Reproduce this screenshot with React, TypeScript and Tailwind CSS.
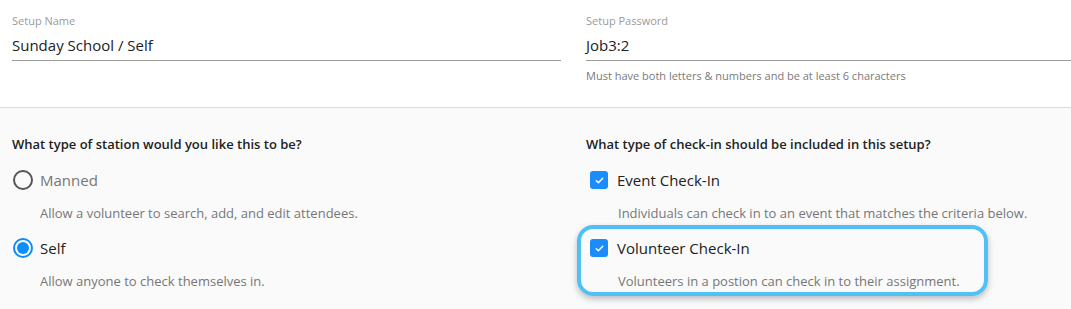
import React from 'react';

const font = { fontFamily: '"Open Sans", Lato, sans-serif' };

function Field({ label, value, hint }: { label: string; value: string; hint?: string }) {
  return (
    <div className="flex flex-col">
      <div className="h-[14px] text-[11px] leading-[14px] text-[#9a9a9a]">{label}</div>
      <div className="mt-[6px] h-[27px] border-b border-[#9b9b9b] text-[15px] leading-[22px] text-[#222]">
        {value}
      </div>
      {hint && <div className="mt-[8px] text-[11px] leading-[14px] text-[#7a7a7a]">{hint}</div>}
    </div>
  );
}

function Radio({ checked }: { checked?: boolean }) {
  return checked ? (
    <span className="flex h-[20px] w-[20px] items-center justify-center rounded-full border-2 border-[#0d8dfb]">
      <span className="h-[12px] w-[12px] rounded-full bg-[#0d8dfb]" />
    </span>
  ) : (
    <span className="h-[20px] w-[20px] rounded-full border-2 border-[#555]" />
  );
}

function Checkbox() {
  return (
    <span className="flex h-[18px] w-[18px] items-center justify-center rounded-[3px] bg-[#1a8cfc]">
      <svg viewBox="0 0 12 12" className="h-[11px] w-[11px]" fill="none" stroke="#fff" strokeWidth={1.6} strokeLinecap="round" strokeLinejoin="round">
        <path d="M2.5 6.3l2.3 2.2 4.7-5" />
      </svg>
    </span>
  );
}

export default function App() {
  return (
    <div className="h-[309px] w-[1071px] overflow-hidden bg-[#fafafa]" style={font}>
      <section className="flex h-[108px] border-b border-[#dcdcdc] bg-white pl-[12px] pt-[14px]">
        <div className="w-[549px]">
          <Field label="Setup Name" value="Sunday School / Self" />
        </div>
        <div className="ml-[25px] flex-1">
          <Field label="Setup Password" value="Job3:2" hint="Must have both letters & numbers and be at least 6 characters" />
        </div>
      </section>

      <section className="flex pl-[12px] pt-[26px]">
        <div className="w-[574px]">
          <h2 className="h-[20px] text-[13px] font-semibold leading-[20px] text-[#222]">
            What type of station would you like this to be?
          </h2>
          <div className="mt-[14px] flex h-[24px] items-center gap-[7px] pl-[1px]">
            <Radio />
            <span className="text-[15px] text-[#777]">Manned</span>
          </div>
          <p className="mt-[11px] pl-[28px] text-[13px] leading-[20px] text-[#777]">
            Allow a volunteer to search, add, and edit attendees.
          </p>
          <div className="mt-[13px] flex h-[24px] items-center gap-[7px] pl-[1px]">
            <Radio checked />
            <span className="text-[15px] text-[#222]">Self</span>
          </div>
          <p className="mt-[11px] pl-[28px] text-[13px] leading-[20px] text-[#777]">
            Allow anyone to check themselves in.
          </p>
        </div>

        <div className="flex-1">
          <h2 className="h-[20px] text-[13px] font-semibold leading-[20px] text-[#222]">
            What type of check-in should be included in this setup?
          </h2>
          <div className="mt-[14px] flex h-[24px] items-center gap-[9px] pl-[4px]">
            <Checkbox />
            <span className="text-[15px] text-[#222]">Event Check-In</span>
          </div>
          <p className="mt-[11px] pl-[32px] text-[13px] leading-[20px] text-[#777]">
            Individuals can check in to an event that matches the criteria below.
          </p>
          <div className="relative mt-[13px] w-[390px]">
            <div className="flex h-[24px] items-center gap-[9px] pl-[4px]">
              <Checkbox />
              <span className="text-[15px] text-[#222]">Volunteer Check-In</span>
            </div>
            <p className="mt-[11px] pl-[32px] text-[13px] leading-[20px] text-[#777]">
              Volunteers in a postion can check in to their assignment.
            </p>
            <div className="pointer-events-none absolute -top-[11px] -bottom-[5px] -left-[9px] w-[411px] rounded-[16px] border-4 border-[#4fc1f6] shadow-[0_3px_6px_rgba(0,0,0,0.25)]" />
          </div>
        </div>
      </section>
    </div>
  );
}
